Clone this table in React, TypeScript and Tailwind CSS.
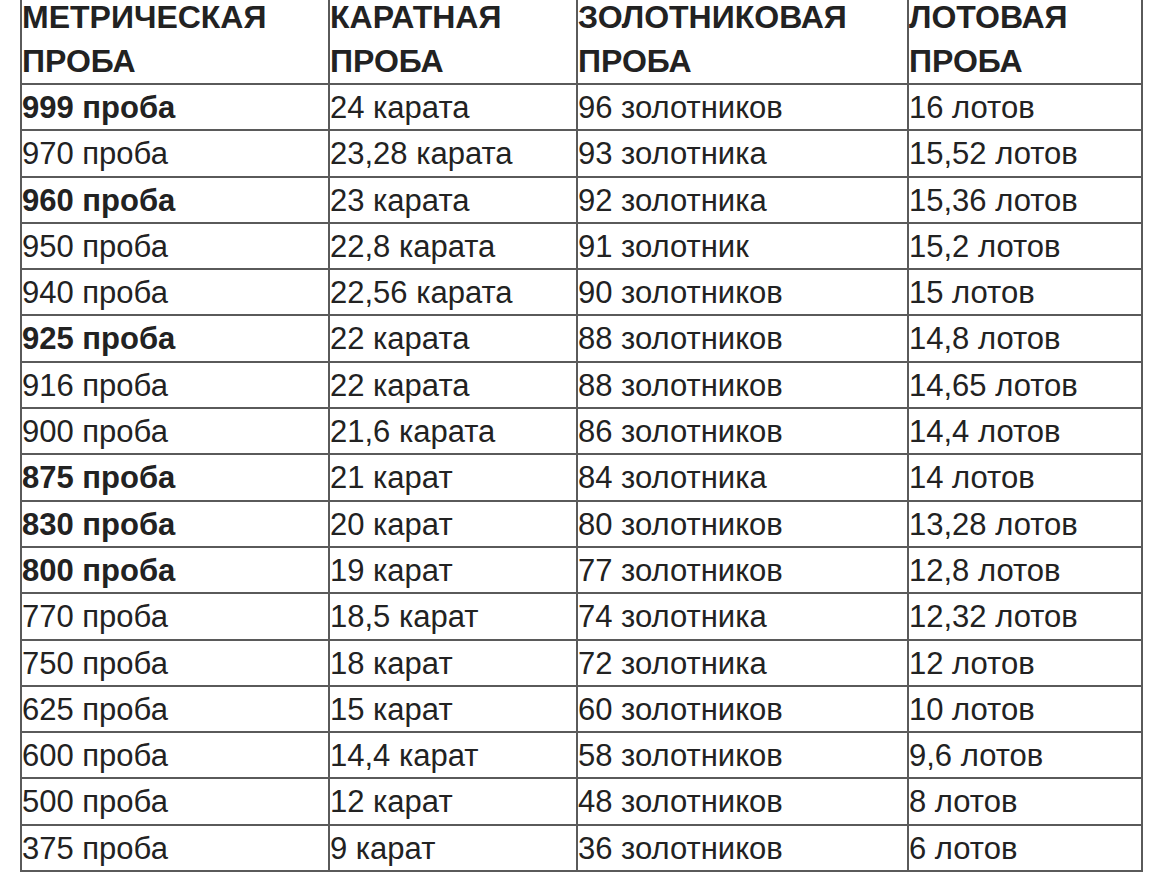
import React from 'react';

interface ProbaRow {
  metric: string;
  carat: string;
  zolotnik: string;
  lot: string;
  bold?: boolean;
}

const headers = [
  ['МЕТРИЧЕСКАЯ', 'ПРОБА'],
  ['КАРАТНАЯ', 'ПРОБА'],
  ['ЗОЛОТНИКОВАЯ', 'ПРОБА'],
  ['ЛОТОВАЯ', 'ПРОБА'],
];

const rows: ProbaRow[] = [
  { metric: '999 проба', carat: '24 карата', zolotnik: '96 золотников', lot: '16 лотов', bold: true },
  { metric: '970 проба', carat: '23,28 карата', zolotnik: '93 золотника', lot: '15,52 лотов' },
  { metric: '960 проба', carat: '23 карата', zolotnik: '92 золотника', lot: '15,36 лотов', bold: true },
  { metric: '950 проба', carat: '22,8 карата', zolotnik: '91 золотник', lot: '15,2 лотов' },
  { metric: '940 проба', carat: '22,56 карата', zolotnik: '90 золотников', lot: '15 лотов' },
  { metric: '925 проба', carat: '22 карата', zolotnik: '88 золотников', lot: '14,8 лотов', bold: true },
  { metric: '916 проба', carat: '22 карата', zolotnik: '88 золотников', lot: '14,65 лотов' },
  { metric: '900 проба', carat: '21,6 карата', zolotnik: '86 золотников', lot: '14,4 лотов' },
  { metric: '875 проба', carat: '21 карат', zolotnik: '84 золотника', lot: '14 лотов', bold: true },
  { metric: '830 проба', carat: '20 карат', zolotnik: '80 золотников', lot: '13,28 лотов', bold: true },
  { metric: '800 проба', carat: '19 карат', zolotnik: '77 золотников', lot: '12,8 лотов', bold: true },
  { metric: '770 проба', carat: '18,5 карат', zolotnik: '74 золотника', lot: '12,32 лотов' },
  { metric: '750 проба', carat: '18 карат', zolotnik: '72 золотника', lot: '12 лотов' },
  { metric: '625 проба', carat: '15 карат', zolotnik: '60 золотников', lot: '10 лотов' },
  { metric: '600 проба', carat: '14,4 карат', zolotnik: '58 золотников', lot: '9,6 лотов' },
  { metric: '500 проба', carat: '12 карат', zolotnik: '48 золотников', lot: '8 лотов' },
  { metric: '375 проба', carat: '9 карат', zolotnik: '36 золотников', lot: '6 лотов' },
];

const cell = 'bg-white pt-[1px] leading-[43.3px] whitespace-nowrap';

export default function App() {
  return (
    <div className="h-[876px] w-[1157px] overflow-hidden bg-white">
      {/* table: gray background + 2px gaps draw the grid lines */}
      <div className="ml-[20px] mt-[-7px] grid w-[1123px] grid-cols-[306px_246px_329px_232px] grid-rows-[88px] auto-rows-[44.3px] gap-[2px] bg-[#5a5a5a] p-[2px] text-[31px] text-[#222] font-['Liberation_Sans',Arial,sans-serif]">
        {headers.map((h) => (
          <div key={h[0]} className="bg-white text-[32px] font-bold leading-[44px] whitespace-nowrap">
            {h[0]}
            <br />
            {h[1]}
          </div>
        ))}
        {rows.map((r) => (
          <React.Fragment key={r.metric}>
            <div className={`${cell} ${r.bold ? 'font-bold' : ''}`}>{r.metric}</div>
            <div className={cell}>{r.carat}</div>
            <div className={cell}>{r.zolotnik}</div>
            <div className={cell}>{r.lot}</div>
          </React.Fragment>
        ))}
      </div>
    </div>
  );
}
